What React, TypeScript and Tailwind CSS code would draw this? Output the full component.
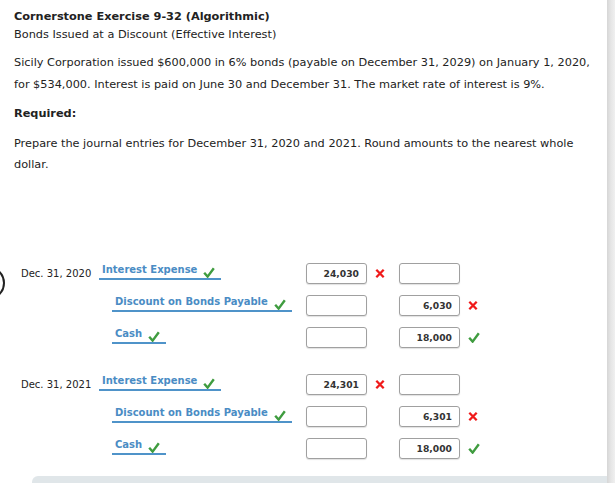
import React from "react";

const Check = () => (
  <svg width="12" height="11" viewBox="0 0 12 11" className="inline-block shrink-0">
    <path d="M1.2 5.8 L4.6 9.6 L10.8 1.2" fill="none" stroke="#3f9c3f" strokeWidth="2.4" strokeLinecap="butt" strokeLinejoin="miter" />
  </svg>
);

const Cross = () => (
  <svg width="10" height="9" viewBox="0 0 10 9" className="inline-block shrink-0">
    <path d="M1.3 0.8 L8.7 8.2 M8.7 0.8 L1.3 8.2" fill="none" stroke="#f01a1a" strokeWidth="2.3" />
  </svg>
);

type Mark = "x" | "check" | null;

const Box = ({ value }: { value?: string }) => (
  <div className="w-[61px] h-[21px] border border-[#a0a0a0] rounded-[3px] shadow-[0_1px_1px_rgba(0,0,0,0.12)] bg-white flex items-center justify-end pr-[7px] text-[9.2px] font-bold text-[#333]">
    {value}
  </div>
);

const Row = ({
  date,
  account,
  indent,
  debit,
  debitMark,
  credit,
  creditMark,
}: {
  date?: string;
  account: string;
  indent?: boolean;
  debit?: string;
  debitMark?: Mark;
  credit?: string;
  creditMark?: Mark;
}) => (
  <div className="flex h-[21px] pl-[21px]">
    <div className="w-[78px] flex items-center text-[10px] leading-[13px] text-[#222]">{date}</div>
    <div className="w-[207px] flex items-start">
      <div
        className={
          (indent ? "ml-[13px] " : "") +
          "flex items-end border-b-2 border-[#4f93c9] pl-[3px] pr-[6px] pb-[2px] text-[10px] leading-[13px] font-bold text-[#4a8cc4]"
        }
      >
        <span>{account}</span>
        <span className="ml-[6px] mb-[-2px]">
          <Check />
        </span>
      </div>
    </div>
    <Box value={debit} />
    <div className="w-[32px] flex items-center pl-[8px]">
      {debitMark === "x" ? <Cross /> : debitMark === "check" ? <Check /> : null}
    </div>
    <Box value={credit} />
    <div className="w-[32px] flex items-center pl-[8px]">
      {creditMark === "x" ? <Cross /> : creditMark === "check" ? <Check /> : null}
    </div>
  </div>
);

export default function App() {
  return (
    <div className="flex w-[615px] h-[483px] bg-white overflow-hidden font-['DejaVu_Sans',sans-serif] text-[#222]">
      <div className="relative w-[607px] flex flex-col">
        <div className="absolute left-[-29px] top-[266px] w-[34px] h-[34px] rounded-full border-2 border-[#222]" />
        <div className="pl-[14px]">
          <div className="mt-[8px] text-[11.3px] leading-[18px] font-bold">Cornerstone Exercise 9-32 (Algorithmic)</div>
          <div className="text-[11.3px] leading-[18px]">Bonds Issued at a Discount (Effective Interest)</div>
          <p className="mt-[8px] text-[11.3px] leading-[22px] pr-[8px]">
            Sicily Corporation issued $600,000 in 6% bonds (payable on December 31, 2029) on January 1, 2020,
            for $534,000. Interest is paid on June 30 and December 31. The market rate of interest is 9%.
          </p>
          <div className="mt-[9px] text-[11.3px] leading-[18px] font-bold">Required:</div>
          <p className="mt-[10px] text-[11.3px] leading-[21px] pr-[20px]">
            Prepare the journal entries for December 31, 2020 and 2021. Round amounts to the nearest whole dollar.
          </p>
        </div>
        <div className="mt-[88px] flex flex-col gap-[11px]">
          <Row date="Dec. 31, 2020" account="Interest Expense" debit="24,030" debitMark="x" />
          <Row account="Discount on Bonds Payable" indent credit="6,030" creditMark="x" />
          <Row account="Cash" indent credit="18,000" creditMark="check" />
        </div>
        <div className="mt-[26px] flex flex-col gap-[11px]">
          <Row date="Dec. 31, 2021" account="Interest Expense" debit="24,301" debitMark="x" />
          <Row account="Discount on Bonds Payable" indent credit="6,301" creditMark="x" />
          <Row account="Cash" indent credit="18,000" creditMark="check" />
        </div>
        <div className="mt-auto ml-[32px] h-[7px] bg-[#e0e6e9] rounded-tl-[6px]" />
      </div>
      <div className="w-[8px] bg-gradient-to-r from-[#d6d6d6] via-[#e6e6e6] to-[#f0f0f0]" />
    </div>
  );
}
